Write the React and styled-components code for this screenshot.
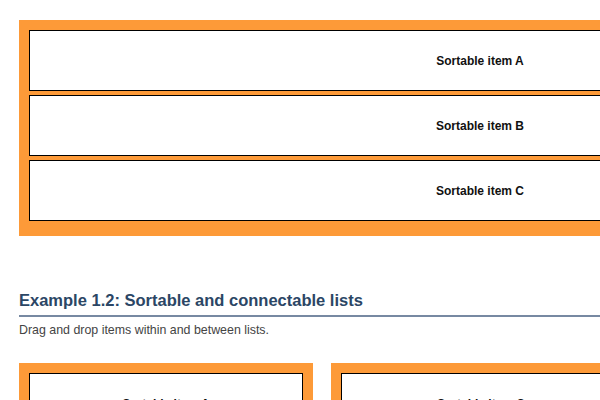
import React from "react";
import styled, { createGlobalStyle } from "styled-components";

const GlobalStyle = createGlobalStyle`
  html, body {
    margin: 0;
    padding: 0;
    background: #fff;
    overflow: hidden;
  }
  body {
    font-family: "Liberation Sans", Arial, sans-serif;
    color: #333;
  }
`;

const Page = styled.div`
  width: 1000px;
  padding: 20px 0 0 19px;
`;

const SortList = styled.ul`
  list-style: none;
  margin: 0;
  width: ${(props) => props.width}px;
  box-sizing: border-box;
  padding: 10px 10px 11px;
  background: #fd9a38;
`;

const Item = styled.li`
  height: 61px;
  box-sizing: border-box;
  border: 1px solid #000;
  background: #fff;
  margin-bottom: 4px;
  display: flex;
  align-items: center;
  justify-content: center;
  font-size: 12px;
  font-weight: bold;
  color: #111;
`;

const Heading = styled.h2`
  margin: 54px 0 0;
  width: 700px;
  font-size: 16.5px;
  font-weight: bold;
  color: #2b4665;
  padding-bottom: 5px;
  border-bottom: 2px solid #7789a2;
  line-height: 20px;
`;

const Desc = styled.p`
  margin: 5px 0 0;
  font-size: 12.4px;
  line-height: 16px;
  color: #444;
`;

const Columns = styled.div`
  display: flex;
  gap: 18px;
  margin-top: 25px;
`;

export default function App() {
  return (
    <Page>
      <GlobalStyle />
      <SortList width={922}>
        <Item>Sortable item A</Item>
        <Item>Sortable item B</Item>
        <Item>Sortable item C</Item>
      </SortList>

      <Heading>Example 1.2: Sortable and connectable lists</Heading>
      <Desc>Drag and drop items within and between lists.</Desc>

      <Columns>
        <SortList width={294}>
          <Item>Sortable item A</Item>
          <Item>Sortable item B</Item>
        </SortList>
        <SortList width={300}>
          <Item>Sortable item C</Item>
          <Item>Sortable item D</Item>
        </SortList>
      </Columns>
    </Page>
  );
}
